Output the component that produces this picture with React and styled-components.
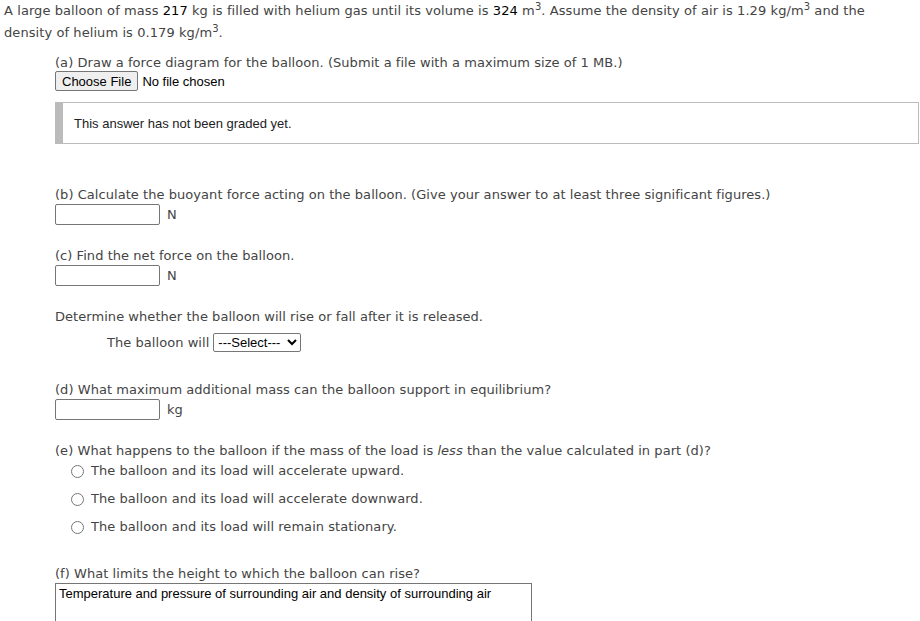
import React from 'react';
import styled, { createGlobalStyle } from 'styled-components';

const GlobalStyle = createGlobalStyle`
  body {
    margin: 0;
    background: #fff;
    font-family: "DejaVu Sans", Verdana, sans-serif;
    font-size: 13px;
    color: #444;
  }
`;

const Page = styled.div`
  padding: 0 1px 0 4px;
  width: 920px;
  box-sizing: border-box;
`;

const Intro = styled.p`
  margin: 0;
  line-height: 22px;
  width: 870px;
  letter-spacing: 0.08px;
`;

const Num = styled.span`
  color: #000;
`;

const Sup = styled.sup`
  font-size: 10px;
  line-height: 0;
`;

const Parts = styled.div`
  padding-left: 51px;
  display: flex;
  flex-direction: column;
  letter-spacing: 0.05px;
`;

const Part = styled.div`
  margin-top: ${p => p.$top || 0}px;
`;

const Question = styled.div`
  line-height: 18px;
`;

const FileRow = styled.div`
  display: flex;
  align-items: center;
  gap: 4px;
  margin-top: -1px;
  font-family: "Liberation Sans", Arial, sans-serif;
  font-size: 13px;
  color: #000;
  letter-spacing: 0;
`;

const FileButton = styled.button`
  font-family: "Liberation Sans", Arial, sans-serif;
  font-size: 13px;
  color: #000;
  background: #efefef;
  border: 1px solid #767676;
  border-radius: 2px;
  padding: 1px 6px;
  height: 20px;
`;

const GradeBox = styled.div`
  margin-top: 11px;
  border: 1px solid #bbb;
  border-left: 8px solid #bbb;
  height: 40px;
  display: flex;
  align-items: center;
  padding-left: 11px;
  font-family: "Liberation Sans", Arial, sans-serif;
  font-size: 13px;
  color: #222;
  letter-spacing: 0;
`;

const AnswerRow = styled.div`
  display: flex;
  align-items: center;
  gap: 7px;
`;

const NumInput = styled.input`
  width: 105px;
  height: 21px;
  box-sizing: border-box;
  border: 1px solid #767676;
  border-radius: 2px;
  margin: 0;
`;

const SelectRow = styled.div`
  display: flex;
  align-items: center;
  gap: 4px;
  margin-top: 7px;
  padding-left: 52px;
`;

const Select = styled.select`
  font-family: "Liberation Sans", Arial, sans-serif;
  font-size: 13px;
  color: #000;
  height: 19px;
  width: 88px;
  border: 1px solid #767676;
  border-radius: 2px;
  padding: 0;
  background: #fff;
`;

const RadioList = styled.div`
  display: flex;
  flex-direction: column;
  gap: 10px;
  padding-left: 16px;
  margin-top: 2px;
`;

const RadioLabel = styled.label`
  display: flex;
  align-items: center;
  gap: 7px;
  line-height: 18px;
`;

const Radio = styled.input`
  margin: 0;
  width: 13px;
  height: 13px;
`;

const TextArea = styled.textarea`
  display: block;
  width: 477px;
  height: 50px;
  box-sizing: border-box;
  border: 1px solid #767676;
  border-radius: 0;
  padding: 2px 3px;
  font-family: "Liberation Sans", Arial, sans-serif;
  font-size: 13px;
  color: #000;
  resize: none;
`;

const radios = [
  'The balloon and its load will accelerate upward.',
  'The balloon and its load will accelerate downward.',
  'The balloon and its load will remain stationary.',
];

export default function App() {
  return (
    <Page>
      <GlobalStyle />
      <Intro>
        A large balloon of mass <Num>217</Num> kg is filled with helium gas until its volume is{' '}
        <Num>324</Num> m<Sup>3</Sup>. Assume the density of air is 1.29 kg/m<Sup>3</Sup> and the
        density of helium is 0.179 kg/m<Sup>3</Sup>.
      </Intro>
      <Parts>
        <Part $top={10}>
          <Question>(a) Draw a force diagram for the balloon. (Submit a file with a maximum size of 1 MB.)</Question>
          <FileRow>
            <FileButton>Choose File</FileButton>
            <span>No file chosen</span>
          </FileRow>
          <GradeBox>This answer has not been graded yet.</GradeBox>
        </Part>

        <Part $top={42}>
          <Question>(b) Calculate the buoyant force acting on the balloon. (Give your answer to at least three significant figures.)</Question>
          <AnswerRow>
            <NumInput />
            <span>N</span>
          </AnswerRow>
        </Part>

        <Part $top={22}>
          <Question>(c) Find the net force on the balloon.</Question>
          <AnswerRow>
            <NumInput />
            <span>N</span>
          </AnswerRow>
        </Part>

        <Part $top={22}>
          <Question>Determine whether the balloon will rise or fall after it is released.</Question>
          <SelectRow>
            <span>The balloon will</span>
            <Select defaultValue="">
              <option value="">---Select---</option>
              <option>rise</option>
              <option>fall</option>
            </Select>
          </SelectRow>
        </Part>

        <Part $top={29}>
          <Question>(d) What maximum additional mass can the balloon support in equilibrium?</Question>
          <AnswerRow>
            <NumInput />
            <span>kg</span>
          </AnswerRow>
        </Part>

        <Part $top={22}>
          <Question>(e) What happens to the balloon if the mass of the load is <i>less</i> than the value calculated in part (d)?</Question>
          <RadioList>
            {radios.map(r => (
              <RadioLabel key={r}>
                <Radio type="radio" name="e" />
                {r}
              </RadioLabel>
            ))}
          </RadioList>
        </Part>

        <Part $top={29}>
          <Question>(f) What limits the height to which the balloon can rise?</Question>
          <TextArea defaultValue="Temperature and pressure of surrounding air and density of surrounding air" />
        </Part>
      </Parts>
    </Page>
  );
}
